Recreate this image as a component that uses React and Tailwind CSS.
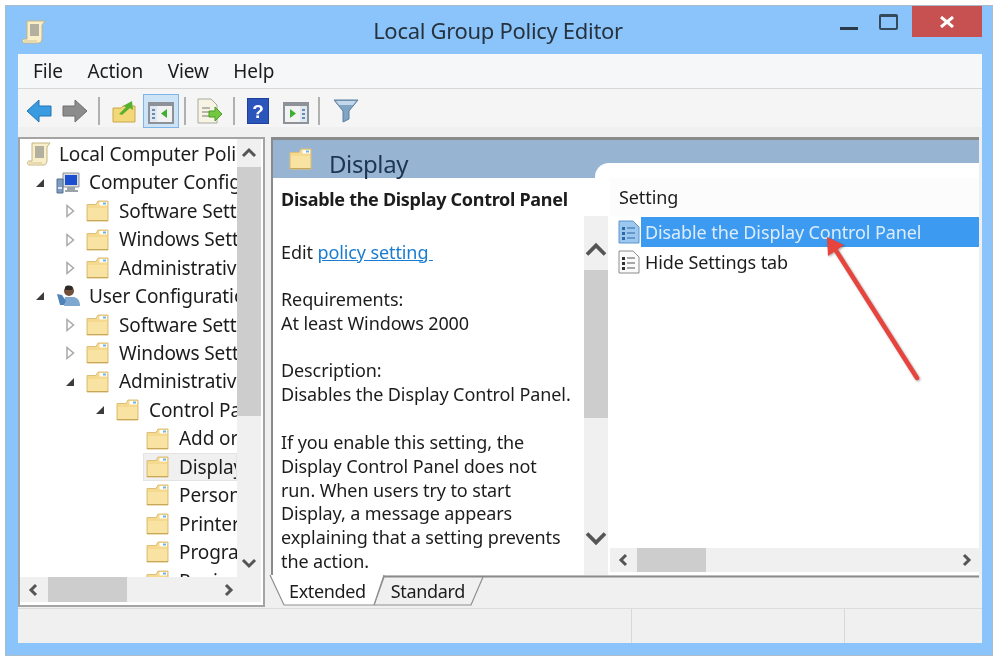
import React from 'react'

const Folder = ({ className = 'w-[23px] h-[22px]' }) => (
    <svg viewBox="0 0 23 22" className={className}>
        <path d="M1 4.500h9l2-3.500h10v20H1z" fill="#f5d98e" stroke="#dcc07a" />
        <path d="M2 8h19v12H2z" fill="#f9e3a2" />
        <path d="M13.500 2h7.500v3.500h-7.500z" fill="#fff" />
        <path d="M17 2.500h3v2h-3z" fill="#6cb4e4" />
        <path d="M1 20.500h21" stroke="#c8a858" />
    </svg>
)

const ScrollIcon = ({ className }) => (
    <svg viewBox="0 0 24 24" className={className}>
        <path d="M5 1h18l-3 4v13c0 3-1 5-4 5H2c-2 0-2-4 0-4h3z" fill="#f8eec8" stroke="#c4b484" />
        <path d="M8 4h9v12H8z" fill="#b4b0a0" />
        <path d="M2 20h13v3H3z" fill="#e6d9ae" />
    </svg>
)

const ComputerIcon = () => (
    <svg viewBox="0 0 24 22" className="w-[24px] h-[22px]">
        <path d="M7 1h16v14H7z" fill="#d8dce0" stroke="#8a939c" />
        <path d="M9 3h12v10H9z" fill="#1c4fd0" />
        <path d="M11 15h8v3h3v2H9v-2h2z" fill="#9aa2aa" />
        <path d="M1 7h6v14H1z" fill="#7f9cc0" stroke="#54708f" />
        <path d="M2 15h4v2H2z" fill="#dbe6f2" />
    </svg>
)

const UserIcon = () => (
    <svg viewBox="0 0 24 22" className="w-[24px] h-[22px]">
        <path d="M9 12h9c4 1 6 4 6 9H8z" fill="#7fa8d0" />
        <circle cx="13" cy="6" r="5" fill="#70503a" />
        <path d="M9 2c2-2 7-2 8 1l-1 2H9z" fill="#2e2a28" />
        <path d="M1 9l5 1 4 6-2 4H4z" fill="#4f84b8" />
    </svg>
)

const FilledExp = () => (
    <svg viewBox="0 0 16 16" className="w-4 h-4"><path d="M12 4v8H4z" fill="#3c3c3c" /></svg>
)
const OpenExp = () => (
    <svg viewBox="0 0 16 16" className="w-4 h-4"><path d="M5 2.500l6.500 5.500L5 13.500z" fill="#fff" stroke="#a8a8a8" strokeWidth="1.500" /></svg>
)

const Chevron = ({ dir, className = 'w-[16px] h-[16px]', stroke = 3 }) => {
    const paths = { up: 'M2 11l6-6 6 6', down: 'M2 5l6 6 6-6', left: 'M10 3l-5 5 5 5', right: 'M6 3l5 5-5 5' }
    return (
        <svg viewBox="0 0 16 16" className={className}>
            <path d={paths[dir]} fill="none" stroke="#555" strokeWidth={stroke} />
        </svg>
    )
}

const tree = [
    { label: 'Local Computer Policy', pad: 'pl-[7px]', icon: 'scroll', root: true },
    { label: 'Computer Configuration', pad: 'pl-[12px]', exp: 'filled', icon: 'computer' },
    { label: 'Software Settings', pad: 'pl-[42px]', exp: 'open' },
    { label: 'Windows Settings', pad: 'pl-[42px]', exp: 'open' },
    { label: 'Administrative Templates', pad: 'pl-[42px]', exp: 'open' },
    { label: 'User Configuration', pad: 'pl-[12px]', exp: 'filled', icon: 'user' },
    { label: 'Software Settings', pad: 'pl-[42px]', exp: 'open' },
    { label: 'Windows Settings', pad: 'pl-[42px]', exp: 'open' },
    { label: 'Administrative Templates', pad: 'pl-[42px]', exp: 'filled' },
    { label: 'Control Panel', pad: 'pl-[72px]', exp: 'filled' },
    { label: 'Add or Remove Programs', pad: 'pl-[102px]' },
    { label: 'Display', pad: 'pl-[102px]', selected: true },
    { label: 'Personalization', pad: 'pl-[102px]' },
    { label: 'Printers', pad: 'pl-[102px]' },
    { label: 'Programs', pad: 'pl-[102px]' },
    { label: 'Regional and Language Options', pad: 'pl-[102px]' },
]

const TreeRow = ({ row }) => (
    <div className={`flex items-center h-[28.45px] shrink-0 ${row.pad}`}>
        {!row.root && (
            <span className="w-4 h-4 mr-[8px] shrink-0">
                {row.exp === 'filled' && <FilledExp />}
                {row.exp === 'open' && <OpenExp />}
            </span>
        )}
        <div className={`flex items-center h-[28px] grow min-w-0 ${row.selected ? 'bg-[#f0f0f0] border border-[#e4e4e4] -ml-[3px] pl-[2px]' : ''}`}>
            <span className="w-[24px] shrink-0 flex justify-start">
                {row.icon === 'computer' ? <ComputerIcon /> : row.icon === 'user' ? <UserIcon /> : row.icon === 'scroll' ? <ScrollIcon className="w-[24px] h-[24px]" /> : <Folder />}
            </span>
            <span className={`min-w-0 overflow-hidden ${row.icon === 'scroll' ? 'ml-[8px]' : 'ml-[9px]'}`}>{row.label}</span>
        </div>
    </div>
)

const Toolbar = () => (
    <div className="flex items-center h-[38px] pl-[8px] pt-[6px] bg-[#f5f5f5] shrink-0">
        <svg viewBox="0 0 26 24" className="w-[26px] h-[24px]"><path d="M1 12L13 1v6h12v10H13v6z" fill="#3a9be0" stroke="#1f74b8" /></svg>
        <svg viewBox="0 0 26 24" className="w-[26px] h-[24px] ml-[10px]"><path d="M25 12L13 1v6H1v10h12v6z" fill="#8c8c8c" stroke="#6e6e6e" /></svg>
        <div className="w-[2px] h-[28px] bg-[#b0b0b0] ml-[10px]" />
        <svg viewBox="0 0 24 24" className="w-[24px] h-[24px] ml-[12px]">
            <path d="M1 9h8l2-2h12v16H1z" fill="#f4d878" stroke="#c8a850" />
            <path d="M7 15l7-7-3-1 9-5 1 9-3-2-8 7z" fill="#58b030" />
        </svg>
        <div className="w-[36px] h-[34px] ml-[7px] -mt-[1px] bg-[#cde4f7] border border-[#7fb4e6] flex items-center justify-center">
            <svg viewBox="0 0 26 22" className="w-[26px] h-[22px] mt-[5px]">
                <path d="M0 0h26v22H0z" fill="#8c9298" />
                <path d="M2 4h22v16H2z" fill="#f2f2f2" />
                <path d="M2 4h7v16H2z" fill="#dfe8f0" />
                <path d="M4 7h3v2H4zM4 11h3v2H4zM4 15h3v2H4z" fill="#6a8cb0" />
                <path d="M19 7v9l-6-4.500z" fill="#3cb030" />
            </svg>
        </div>
        <div className="w-[2px] h-[28px] bg-[#b0b0b0] ml-[5px]" />
        <svg viewBox="0 0 26 26" className="w-[26px] h-[26px] ml-[11px]">
            <path d="M1 1h13l6 6v18H1z" fill="#f8f4e4" stroke="#a8a8a0" />
            <path d="M5 10h8M5 14h8M5 18h8" stroke="#777" />
            <path d="M12 13h6v-4l7 7-7 7v-4h-6z" fill="#74c840" stroke="#4c9c28" />
        </svg>
        <div className="w-[2px] h-[28px] bg-[#b0b0b0] ml-[10px]" />
        <svg viewBox="0 0 22 26" className="w-[22px] h-[26px] ml-[12px]">
            <path d="M0 0h22v26H0z" fill="#1f3f9c" />
            <path d="M1 1h20v24H1z" fill="#2c55bc" />
            <text x="11" y="20" textAnchor="middle" fontSize="19" fontWeight="700" fontFamily="Liberation Sans, sans-serif" fill="#fff">?</text>
        </svg>
        <svg viewBox="0 0 26 22" className="w-[26px] h-[22px] ml-[14px] mt-[3px]">
            <path d="M0 0h26v22H0z" fill="#8c9298" />
            <path d="M2 4h22v16H2z" fill="#f2f2f2" />
            <path d="M17 4h7v16h-7z" fill="#dfe8f0" />
            <path d="M19 7h3v2h-3zM19 11h3v2h-3zM19 15h3v2h-3z" fill="#6a8cb0" />
            <path d="M7 7v9l6-4.500z" fill="#3cb030" />
        </svg>
        <div className="w-[2px] h-[28px] bg-[#b0b0b0] ml-[9px]" />
        <svg viewBox="0 0 26 24" className="w-[26px] h-[24px] ml-[13px]">
            <path d="M1 1h24l-9 11v8l-6 3V12z" fill="#7fa4c4" stroke="#5c7f9e" />
            <path d="M3 2h20l-3 4H6z" fill="#c4d8ea" />
        </svg>
    </div>
)

const ListIcon = ({ selected }) => (
    <svg viewBox="0 0 22 24" className="w-[22px] h-[24px] shrink-0">
        <path d="M1 1h14l6 6v16H1z" fill={selected ? '#9cc8f0' : '#fafafa'} stroke={selected ? '#5a94cc' : '#8c8c8c'} />
        <path d="M4 7h3v3H4zM4 12h3v3H4zM4 17h3v3H4z" fill={selected ? '#2c68a8' : '#333'} />
        <path d="M9 8h8M9 13h8M9 18h8" stroke={selected ? '#2c68a8' : '#555'} />
    </svg>
)

const enableLines = [
    'If you enable this setting, the',
    'Display Control Panel does not',
    'run. When users try to start',
    'Display, a message appears',
    'explaining that a setting prevents',
    'the action.',
]

const App = () => {
    return (
        <div className="relative w-[1000px] h-[661px] bg-white pt-[5px] px-[5px] overflow-hidden blur-[0.5px] font-['Noto_Sans',sans-serif] text-[18px] tracking-[-0.1px] text-[#1c1c1c]">
            <div className="w-[988px] h-[651px] bg-[#8ac4fa] border border-[#a9bccd] flex flex-col">
                {/* title bar */}
                <div className="flex items-start h-[48px] shrink-0 pl-[16px]">
                    <ScrollIcon className="w-[24px] h-[24px] mt-[14px]" />
                    <div className="ml-[325px] mt-[8px] text-[22px] tracking-[-0.3px] text-[#26323e] w-[254px] text-center whitespace-nowrap">Local Group Policy Editor</div>
                    <div className="ml-[215px] mt-[21px] w-[18px] h-[3px] bg-[#2b3a48]" />
                    <div className="ml-[21px] mt-[8px] w-[19px] h-[16px] border-2 border-t-[3px] border-[#34495c] rounded-[2px]" />
                    <div className="ml-[14px] w-[70px] h-[31px] bg-[#c75050] flex items-center justify-center">
                        <svg viewBox="0 0 14 12" className="w-[14px] h-[12px]"><path d="M1 1l12 10M13 1L1 11" stroke="#fff" strokeWidth="3" /></svg>
                    </div>
                </div>

                <div className="ml-[12px] w-[964px] h-[589px] bg-[#f0f0f0] flex flex-col">
                    {/* menu */}
                    <div className="flex items-center gap-[24.500px] h-[35px] pl-[15px] pt-[1px] text-[19px] bg-[#f6f7f8] border-b border-[#d6d6d6] shrink-0">
                        <span>File</span>
                        <span>Action</span>
                        <span>View</span>
                        <span>Help</span>
                    </div>
                    <Toolbar />

                    <div className="flex mt-[10px] h-[470px] shrink-0">
                        {/* tree panel */}
                        <div className="w-[247px] h-full border-2 border-[#a4a4a4] bg-white flex flex-col">
                            <div className="flex h-[438px] shrink-0">
                                <div className="w-[217px] overflow-hidden whitespace-nowrap flex flex-col pt-[1px] text-[19px]">
                                    {tree.map((row, i) => <TreeRow key={i} row={row} />)}
                                </div>
                                <div className="w-[24px] bg-[#f0f0f0] flex flex-col items-center">
                                    <div className="h-[28px] flex items-center"><Chevron dir="up" /></div>
                                    <div className="w-full h-[249px] bg-[#cdcdcd]" />
                                    <div className="flex-1" />
                                    <div className="h-[28px] flex items-center"><Chevron dir="down" /></div>
                                </div>
                            </div>
                            <div className="w-[241px] h-[25px] bg-[#f0f0f0] flex items-center">
                                <div className="w-[28px] flex justify-center"><Chevron dir="left" /></div>
                                <div className="w-[79px] h-full bg-[#cdcdcd]" />
                                <div className="ml-[87px] w-[28px] flex justify-center"><Chevron dir="right" /></div>
                            </div>
                        </div>

                        {/* right panel */}
                        <div className="ml-[6px] w-[708px] h-full flex flex-col">
                            <div className="flex flex-col h-[438px] border-l-2 border-t-[3px] border-[#8a8a8a] bg-white shrink-0">
                                <div className="flex h-[38px] bg-[#98b4d3] shrink-0">
                                    <div className="ml-[16px] mt-[8px]"><Folder /></div>
                                    <div className="ml-[17px] mt-[6px] text-[24px] tracking-[-0.4px] text-[#1d3550]">Display</div>
                                    <div className="ml-auto self-end w-[384px] h-[15px] bg-white rounded-tl-[14px]" />
                                </div>
                                <div className="flex flex-1 min-h-0">
                                    <div className="w-[311px] shrink-0 overflow-hidden pl-[8px] pt-[10px] leading-[23.7px] whitespace-nowrap">
                                        <div className="font-bold tracking-[-0.3px]">Disable the Display Control Panel</div>
                                        <div className="mt-[29px]">Edit <span className="text-[#1a7cd0] underline">policy setting&nbsp;</span></div>
                                        <div className="mt-[23.700px]">Requirements:</div>
                                        <div>At least Windows 2000</div>
                                        <div className="mt-[23.700px]">Description:</div>
                                        <div>Disables the Display Control Panel.</div>
                                        <div className="h-[24.700px]" />
                                        {enableLines.map((line) => <div key={line}>{line}</div>)}
                                    </div>
                                    <div className="w-[24px] shrink-0 flex flex-col pt-[38px]">
                                        <div className="flex-1 bg-[#f0f0f0] flex flex-col items-center">
                                            <div className="h-[54px] pt-[14px] w-full flex items-center justify-center"><Chevron dir="up" className="w-[24px] h-[24px]" stroke={2.500} /></div>
                                            <div className="w-full h-[148px] bg-[#cdcdcd]" />
                                            <div className="flex-1" />
                                            <div className="h-[70px] pb-[4px] flex items-center"><Chevron dir="down" className="w-[24px] h-[24px]" stroke={2.500} /></div>
                                        </div>
                                    </div>
                                    <div className="ml-[2px] flex-1 min-w-0 flex flex-col">
                                        <div className="h-[38px] pt-[1px] bg-[#fcfcfc] flex items-center pl-[9px] shrink-0">Setting</div>
                                        <div className="flex-1 min-h-0 flex flex-col pt-[1px]">
                                            <div className="flex items-center h-[30px] pl-[8px]">
                                                <ListIcon selected />
                                                <div className="ml-[1px] flex-1 h-full flex items-center pl-[4px] bg-[#3c9bf0] text-[#dcecfb]">Disable the Display Control Panel</div>
                                            </div>
                                            <div className="flex items-center h-[30px] pl-[8px]">
                                                <ListIcon />
                                                <div className="ml-[5px]">Hide Settings tab</div>
                                            </div>
                                        </div>
                                        <div className="h-[24px] bg-[#f0f0f0] flex items-center shrink-0 mb-[3px]">
                                            <div className="w-[27px] flex justify-center"><Chevron dir="left" /></div>
                                            <div className="w-[69px] h-full bg-[#cdcdcd]" />
                                            <div className="ml-auto w-[27px] flex justify-center"><Chevron dir="right" /></div>
                                        </div>
                                    </div>
                                </div>
                            </div>
                            {/* tabs */}
                            <div className="relative flex-1 pl-[18px] pt-[1px] flex items-center gap-[25px] tracking-[-0.35px]">
                                <svg viewBox="0 0 708 32" className="absolute inset-0 w-[708px] h-[32px] overflow-visible">
                                    <path d="M0 1.500h708" stroke="#8a8a8a" strokeWidth="2" />
                                    <path d="M103 30L113 2M103 30h97l12-28" fill="none" stroke="#8f8f8f" strokeWidth="1.200" />
                                    <path d="M-1 0l14 30h90l10-30z" fill="#fff" />
                                    <path d="M-1 0l14 30h90l10-30" fill="none" stroke="#8f8f8f" strokeWidth="1.200" />
                                </svg>
                                <span className="relative">Extended</span>
                                <span className="relative">Standard</span>
                            </div>
                        </div>
                    </div>

                    {/* status bar */}
                    <div className="mt-[1px] h-[35px] flex border-t border-[#dcdcdc]">
                        <div className="w-[614px] border-r border-[#d8d8d8]" />
                        <div className="w-[213px] border-r border-[#d8d8d8]" />
                    </div>
                </div>
            </div>

            {/* annotation arrow */}
            <svg viewBox="0 0 1000 661" className="absolute inset-0 w-[1000px] h-[661px] pointer-events-none drop-shadow-[1px_1px_1px_rgba(0,0,0,0.35)]">
                <path d="M917 378L835 249" stroke="#e8443e" strokeWidth="4.500" strokeLinecap="round" />
                <path d="M827 237L828 256L844 245z" fill="#e8443e" />
            </svg>
        </div>
    )
}

export default App
